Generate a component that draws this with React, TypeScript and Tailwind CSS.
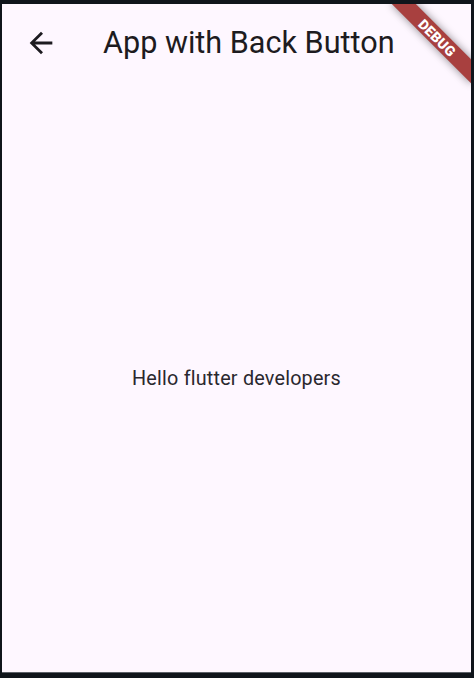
function DebugBanner() {
  // Flutter-style "DEBUG" ribbon in the top-right corner
  return (
    <div className="pointer-events-none absolute top-0 right-0 h-0 w-0 rotate-45 origin-top-left">
      <div className="absolute left-[-56px] top-[39px] flex h-[17px] w-[112px] items-center justify-center bg-[#a8403f] shadow-[0_0_8px_rgba(0,0,0,0.45)]">
        <span className="text-[14px] font-black leading-none tracking-[0.02em] text-white [font-family:Roboto,'Liberation_Sans',sans-serif]">
          DEBUG
        </span>
      </div>
    </div>
  )
}

function BackArrow() {
  return (
    <svg viewBox="0 0 24 24" className="h-[34px] w-[34px] fill-current">
      <path d="M20 11H7.83l5.59-5.59L12 4l-8 8 8 8 1.41-1.41L7.83 13H20v-2z" />
    </svg>
  )
}

export default function App() {
  return (
    <div className="h-[678px] w-[474px] bg-[#10151b] pt-[4px] pl-[2px] pr-[3px] pb-[5px]">
      <div className="relative flex h-full flex-col overflow-hidden border-b border-[#5d6168] bg-[#fef7ff] text-[#1d1b20] [font-family:Roboto,'Liberation_Sans',sans-serif]">
        <header className="flex h-[78px] shrink-0 items-center">
          <button className="flex h-[78px] w-[78px] items-center justify-center">
            <BackArrow />
          </button>
          <h1 className="ml-[23px] text-[30.6px] leading-none font-normal">App with Back Button</h1>
        </header>
        <main className="flex flex-1 items-center justify-center pt-[3px]">
          <p className="text-[19.8px] leading-none tracking-[0.01em] text-[#2a282e]">Hello flutter developers</p>
        </main>
        <DebugBanner />
      </div>
    </div>
  )
}
